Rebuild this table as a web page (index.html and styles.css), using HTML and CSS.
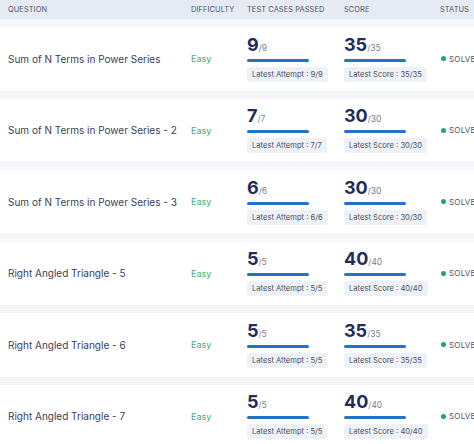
FILE: index.html
```html
<!DOCTYPE html>
<html>
<head>
<meta charset="utf-8">
<link rel="stylesheet" href="styles.css">
</head>
<body>
<div class="table">
  <div class="head">
    <div>Question</div>
    <div>Difficulty</div>
    <div>Test Cases Passed</div>
    <div>Score</div>
    <div>Status</div>
  </div>
  <div class="rows">
    <div class="row">
      <div class="q">Sum of N Terms in Power Series</div>
      <div class="diff">Easy</div>
      <div class="metric"><div class="num"><b>9</b><span>/9</span></div><div class="bar"></div><div class="pill">Latest Attempt : 9/9</div></div>
      <div class="metric"><div class="num"><b>35</b><span>/35</span></div><div class="bar"></div><div class="pill">Latest Score : 35/35</div></div>
      <div class="status"><i class="dot"></i>SOLVED</div>
    </div>
    <div class="row">
      <div class="q">Sum of N Terms in Power Series - 2</div>
      <div class="diff">Easy</div>
      <div class="metric"><div class="num"><b>7</b><span>/7</span></div><div class="bar"></div><div class="pill">Latest Attempt : 7/7</div></div>
      <div class="metric"><div class="num"><b>30</b><span>/30</span></div><div class="bar"></div><div class="pill">Latest Score : 30/30</div></div>
      <div class="status"><i class="dot"></i>SOLVED</div>
    </div>
    <div class="row">
      <div class="q">Sum of N Terms in Power Series - 3</div>
      <div class="diff">Easy</div>
      <div class="metric"><div class="num"><b>6</b><span>/6</span></div><div class="bar"></div><div class="pill">Latest Attempt : 6/6</div></div>
      <div class="metric"><div class="num"><b>30</b><span>/30</span></div><div class="bar"></div><div class="pill">Latest Score : 30/30</div></div>
      <div class="status"><i class="dot"></i>SOLVED</div>
    </div>
    <div class="row">
      <div class="q">Right Angled Triangle - 5</div>
      <div class="diff">Easy</div>
      <div class="metric"><div class="num"><b>5</b><span>/5</span></div><div class="bar"></div><div class="pill">Latest Attempt : 5/5</div></div>
      <div class="metric"><div class="num"><b>40</b><span>/40</span></div><div class="bar"></div><div class="pill">Latest Score : 40/40</div></div>
      <div class="status"><i class="dot"></i>SOLVED</div>
    </div>
    <div class="row">
      <div class="q">Right Angled Triangle - 6</div>
      <div class="diff">Easy</div>
      <div class="metric"><div class="num"><b>5</b><span>/5</span></div><div class="bar"></div><div class="pill">Latest Attempt : 5/5</div></div>
      <div class="metric"><div class="num"><b>35</b><span>/35</span></div><div class="bar"></div><div class="pill">Latest Score : 35/35</div></div>
      <div class="status"><i class="dot"></i>SOLVED</div>
    </div>
    <div class="row">
      <div class="q">Right Angled Triangle - 7</div>
      <div class="diff">Easy</div>
      <div class="metric"><div class="num"><b>5</b><span>/5</span></div><div class="bar"></div><div class="pill">Latest Attempt : 5/5</div></div>
      <div class="metric"><div class="num"><b>40</b><span>/40</span></div><div class="bar"></div><div class="pill">Latest Score : 40/40</div></div>
      <div class="status"><i class="dot"></i>SOLVED</div>
    </div>
  </div>
</div>
</body>
</html>
```
FILE: styles.css
```css
html, body {
  margin: 0;
  padding: 0;
  background: #f5f6f9;
  overflow: hidden;
}
body {
  font-family: Inter, "Liberation Sans", sans-serif;
  width: 474px;
  height: 444px;
}
.table {
  width: 474px;
}
.head {
  display: grid;
  grid-template-columns: 183px 56px 97px 96px 1fr;
  padding-left: 8px;
  height: 19px;
  align-items: center;
  background: #e5eaf3;
  font-size: 7.4px;
  text-transform: uppercase;
  color: #4d5566;
  letter-spacing: 0.1px;
  white-space: nowrap;
}
.rows {
  display: flex;
  flex-direction: column;
  gap: 7px;
  padding-top: 8px;
}
.row {
  display: grid;
  grid-template-columns: 183px 56px 97px 96px 1fr;
  padding-left: 8px;
  height: 64.5px;
  align-items: center;
  background: #ffffff;
  border-bottom: 1px solid #eef0f4;
  box-sizing: border-box;
  white-space: nowrap;
}
.q {
  font-size: 10px;
  color: #3a4059;
}
.diff {
  font-size: 9px;
  color: #3fae73;
}
.metric {
  display: flex;
  flex-direction: column;
  align-items: flex-start;
}
.num {
  color: #1f2c5c;
  line-height: 18px;
}
.num b {
  font-size: 18px;
  font-weight: 700;
}
.num span {
  font-size: 8.5px;
  color: #7a8090;
}
.bar {
  width: 62px;
  height: 3px;
  background: #2473c6;
  border-radius: 2px;
  margin-top: 2px;
}
.pill {
  margin-top: 5px;
  background: #eef1f5;
  border-radius: 3px;
  font-size: 7.6px;
  color: #4b5263;
  padding: 0 5px;
  height: 15px;
  line-height: 15px;
}
.status {
  display: flex;
  align-items: center;
  font-size: 8px;
  color: #4d5566;
  letter-spacing: 0.2px;
}
.dot {
  width: 5px;
  height: 5px;
  border-radius: 50%;
  background: #1fa56d;
  margin-right: 3px;
  margin-left: 1px;
}
```
